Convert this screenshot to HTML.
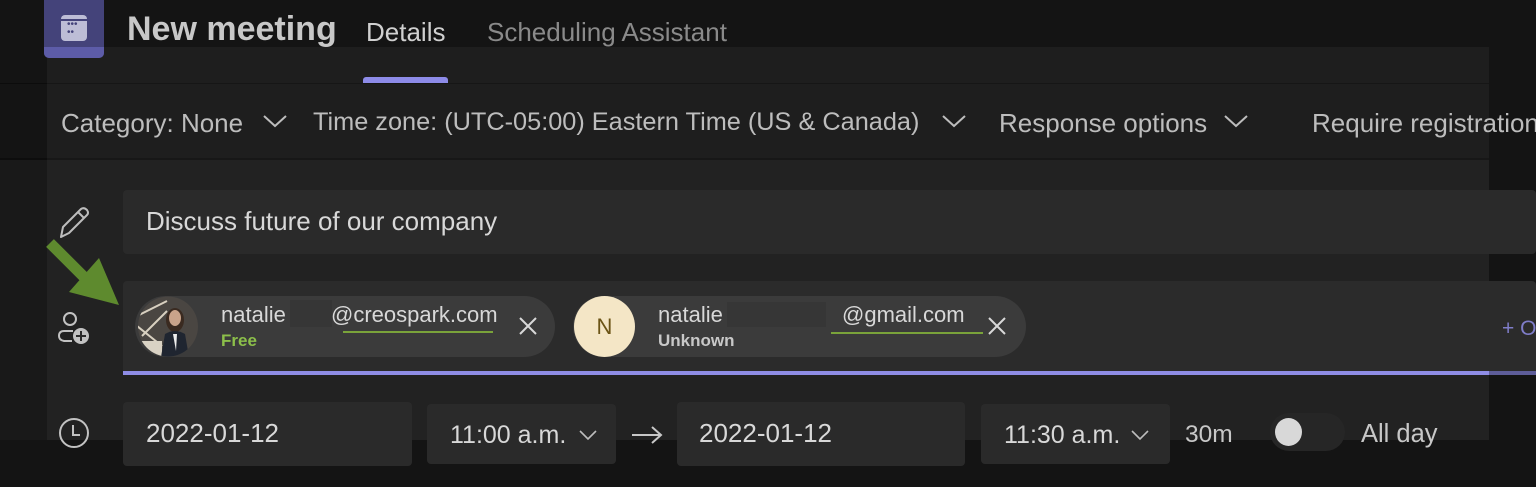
<!DOCTYPE html>
<html><head><meta charset="utf-8"><style>
*{margin:0;padding:0;box-sizing:border-box}
body{width:1536px;height:487px;background:#141414;position:relative;overflow:hidden;font-family:"Liberation Sans",sans-serif;color:#d6d6d6}
.a{position:absolute}
.ov{left:47px;top:47px;width:1442px;height:393px;background:rgba(255,255,255,0.045)}
.fld{background:#2a2a2a;border-radius:4px}
.t{white-space:nowrap}
</style></head><body>
<div class="a" style="left:0;top:83px;width:1536px;height:1px;background:#0c0c0c"></div>
<div class="a" style="left:0;top:158px;width:1536px;height:2px;background:#0d0d0d"></div>
<div class="a" style="left:0;top:160px;width:1536px;height:280px;background:#191919"></div>
<div class="a ov"></div>
<div class="a" style="left:1489px;top:47px;width:47px;height:393px;background:#141414"></div>

<!-- app icon -->
<div class="a" style="left:44px;top:0;width:60px;height:58px;background:#44437a;border-radius:0 0 5px 5px"></div>
<div class="a" style="left:44px;top:47px;width:60px;height:11px;background:#5d5ca8;border-radius:0 0 5px 5px"></div>
<div class="a" style="left:61px;top:15px;width:26px;height:26px;background:#bdbdd6;border-radius:4px"></div>
<div class="a" style="left:61px;top:19px;width:26px;height:2px;background:#44437a"></div>
<div class="a t" style="left:67px;top:21px;font-size:10px;color:#44437a;line-height:8px">•••<br>••</div>

<div class="a t" style="left:127px;top:10px;font-size:34px;font-weight:bold;color:#c8c8c8">New meeting</div>
<div class="a t" style="left:366px;top:17px;font-size:26px;color:#d0d0d0">Details</div>
<div class="a t" style="left:487px;top:17px;font-size:26px;color:#8a8a8a">Scheduling Assistant</div>
<div class="a" style="left:363px;top:77px;width:85px;height:6px;background:#8d8be8;border-radius:3px 3px 0 0"></div>

<div class="a t" style="left:61px;top:108px;font-size:26px;color:#bdbdbd">Category: None</div>
<svg class="a" style="left:262px;top:113px" width="26" height="16"><path d="M2 3 L13 13 L24 3" stroke="#bdbdbd" stroke-width="2" fill="none"/></svg>
<div class="a t" style="left:313px;top:108px;font-size:25.3px;color:#bdbdbd">Time zone: (UTC-05:00) Eastern Time (US &amp; Canada)</div>
<svg class="a" style="left:941px;top:113px" width="26" height="16"><path d="M2 3 L13 13 L24 3" stroke="#bdbdbd" stroke-width="2" fill="none"/></svg>
<div class="a t" style="left:999px;top:108px;font-size:26px;color:#bdbdbd">Response options</div>
<svg class="a" style="left:1223px;top:113px" width="26" height="16"><path d="M2 3 L13 13 L24 3" stroke="#bdbdbd" stroke-width="2" fill="none"/></svg>
<div class="a t" style="left:1312px;top:108px;font-size:26px;color:#bdbdbd">Require registration</div>

<!-- pencil -->
<svg class="a" style="left:56px;top:205px" width="36" height="36"><path d="M5 32 L7 22 L25 4 Q28 2 31 5 Q33 8 31 10 L13 28 Z M22 7 L28 13" stroke="#bdbdbd" stroke-width="2" fill="none" stroke-linejoin="round"/></svg>
<div class="a fld" style="left:123px;top:190px;width:1413px;height:64px"></div>
<div class="a t" style="left:146px;top:206px;font-size:26px;color:#d8d8d8">Discuss future of our company</div>

<!-- people field -->
<div class="a" style="left:123px;top:281px;width:1413px;height:91px;background:#2b2b2b;border-radius:4px 4px 0 0"></div>
<div class="a" style="left:123px;top:371px;width:1366px;height:4px;background:#8f8de6"></div>
<div class="a" style="left:1489px;top:371px;width:47px;height:4px;background:#5e5d99"></div>
<svg class="a" style="left:56px;top:310px" width="36" height="36"><circle cx="14" cy="9" r="6" stroke="#c2c2c2" stroke-width="2" fill="none"/><path d="M17 21 H8 Q3 21 3 26 Q3 30 8 31 H16" stroke="#c2c2c2" stroke-width="2" fill="none"/><circle cx="25" cy="26" r="8" fill="#c2c2c2"/><path d="M25 21 V31 M20 26 H30" stroke="#2b2b2b" stroke-width="2"/></svg>

<div class="a" style="left:135px;top:296px;width:420px;height:61px;background:#3b3b3b;border-radius:31px"></div>
<svg class="a" style="left:137px;top:296px" width="62" height="61"><defs><clipPath id="c"><circle cx="31" cy="30.5" r="30"/></clipPath></defs><g clip-path="url(#c)"><rect width="62" height="61" fill="#4a4642"/><path d="M0 20 L30 5 M5 40 L30 15 M0 30 L25 50" stroke="#d8d0c0" stroke-width="2"/><rect x="0" y="45" width="25" height="20" fill="#d9d2c4"/><ellipse cx="38" cy="24" rx="9" ry="12" fill="#3a2a20"/><ellipse cx="38" cy="22" rx="6" ry="8" fill="#c9a38a"/><path d="M24 61 L28 38 Q38 32 48 38 L52 61 Z" fill="#1f2530"/><path d="M36 38 L40 38 L39 55 Z" fill="#eee"/></g></svg>
<div class="a t" style="left:221px;top:302px;font-size:22px;color:#d8d8d8">natalie</div>
<div class="a" style="left:290px;top:300px;width:42px;height:27px;background:#363636"></div>
<div class="a t" style="left:331px;top:302px;font-size:22px;color:#d8d8d8">@creospark.com</div>
<div class="a" style="left:343px;top:331px;width:150px;height:2px;background:#7aa33a"></div>
<div class="a t" style="left:221px;top:331px;font-size:17px;font-weight:bold;color:#8cbf4a">Free</div>
<svg class="a" style="left:518px;top:316px" width="20" height="20"><path d="M2 2 L18 18 M18 2 L2 18" stroke="#d8d8d8" stroke-width="2"/></svg>

<div class="a" style="left:573px;top:296px;width:453px;height:61px;background:#3b3b3b;border-radius:31px"></div>
<div class="a" style="left:574px;top:296px;width:61px;height:61px;background:#f4e6c6;border-radius:50%;text-align:center;line-height:61px;font-size:22px;color:#6b5416">N</div>
<div class="a t" style="left:658px;top:302px;font-size:22px;color:#d8d8d8">natalie</div>
<div class="a" style="left:727px;top:302px;width:99px;height:25px;background:#363636"></div>
<div class="a t" style="left:842px;top:302px;font-size:22px;color:#d8d8d8">@gmail.com</div>
<div class="a" style="left:831px;top:332px;width:152px;height:2px;background:#7aa33a"></div>
<div class="a t" style="left:658px;top:331px;font-size:17px;font-weight:bold;color:#c8c8c8">Unknown</div>
<svg class="a" style="left:987px;top:316px" width="20" height="20"><path d="M2 2 L18 18 M18 2 L2 18" stroke="#d8d8d8" stroke-width="2"/></svg>
<div class="a t" style="left:1502px;top:317px;font-size:21px;color:#7f7dc9">+ O</div>

<!-- green arrow -->
<svg class="a" style="left:40px;top:235px" width="90" height="80"><path d="M10 8 L58 56" stroke="#5e8a2e" stroke-width="11"/><path d="M29 57 L59 23 L79 70 Z" fill="#5e8a2e"/></svg>

<!-- time row -->
<svg class="a" style="left:57px;top:416px" width="34" height="34"><circle cx="17" cy="17" r="14" stroke="#c2c2c2" stroke-width="2" fill="none"/><path d="M16 9 V19 H23" stroke="#c2c2c2" stroke-width="2" fill="none"/></svg>
<div class="a fld" style="left:123px;top:402px;width:289px;height:64px"></div>
<div class="a t" style="left:146px;top:418px;font-size:26px;color:#d8d8d8">2022-01-12</div>
<div class="a fld" style="left:427px;top:404px;width:189px;height:60px"></div>
<div class="a t" style="left:450px;top:421px;font-size:25px;color:#d8d8d8">11:00 a.m.</div>
<svg class="a" style="left:578px;top:428px" width="20" height="14"><path d="M2 3 L10 11 L18 3" stroke="#bdbdbd" stroke-width="1.6" fill="none"/></svg>
<svg class="a" style="left:630px;top:424px" width="34" height="22"><path d="M2 11 H31 M22 3 L31 11 L22 19" stroke="#c8c8c8" stroke-width="2" fill="none"/></svg>
<div class="a fld" style="left:677px;top:402px;width:288px;height:64px"></div>
<div class="a t" style="left:699px;top:418px;font-size:26px;color:#d8d8d8">2022-01-12</div>
<div class="a fld" style="left:981px;top:404px;width:189px;height:60px"></div>
<div class="a t" style="left:1004px;top:421px;font-size:25px;color:#d8d8d8">11:30 a.m.</div>
<svg class="a" style="left:1130px;top:428px" width="20" height="14"><path d="M2 3 L10 11 L18 3" stroke="#bdbdbd" stroke-width="1.6" fill="none"/></svg>
<div class="a t" style="left:1185px;top:421px;font-size:24.5px;color:#c8c8c8">30m</div>
<div class="a" style="left:1270px;top:413px;width:75px;height:38px;background:#262626;border-radius:19px"></div>
<div class="a" style="left:1275px;top:418px;width:27px;height:28px;background:#d8d8d8;border-radius:50%"></div>
<div class="a t" style="left:1361px;top:420px;font-size:25.5px;color:#c8c8c8">All day</div>
</body></html>
